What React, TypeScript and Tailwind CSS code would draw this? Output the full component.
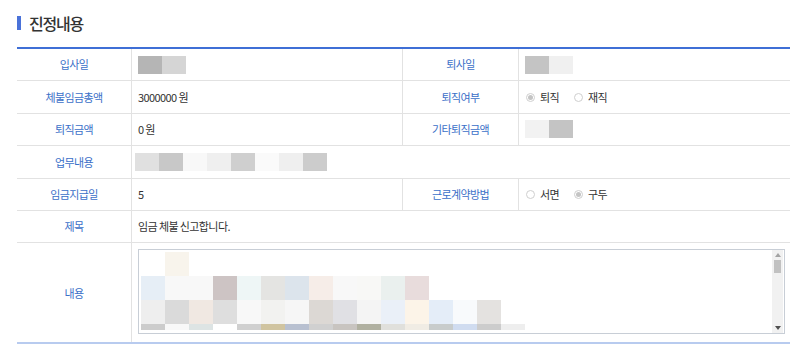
import React from "react";

const mosaic: string[][] = [
  ["#ffffff", "#f8f4ec"],
  ["#e6eef6", "#f8f8f8", "#f8f8f8", "#cdc4c4", "#eef6f6", "#e4e4e2", "#dce4ec", "#f6ede8", "#f8f8f8", "#f8f8f6", "#eaf0ee", "#e8dcdc"],
  ["#eeeeee", "#dadada", "#f0e8e2", "#dedede", "#f8f8f8", "#f2f2f0", "#f6f6f6", "#dcd8d4", "#e0e0e4", "#f4f4f4", "#eaf0f8", "#fcf4e8", "#e4edf8", "#f8fafc", "#e4e2e0"],
  ["#cccccc", "#f8f8f8", "#dde4e4", "#ffffff", "#d0d0d0", "#d0c4a0", "#b8c0d0", "#d0d0d0", "#c8c4c0", "#b0b0a0", "#e0e0dc", "#f0ece4", "#c8cccc", "#d0dcf0", "#cccccc", "#eeeeee"],
];

function Blocks({ colors }: { colors: string[] }) {
  return (
    <div className="flex h-[18px]">
      {colors.map((c, i) => (
        <div key={i} className="w-[24px] h-full" style={{ backgroundColor: c }} />
      ))}
    </div>
  );
}

function Radio({ checked, label }: { checked?: boolean; label: string }) {
  return (
    <label className="flex items-center gap-[5px]">
      <span className="w-[9px] h-[9px] rounded-full border border-[#cfcfcf] bg-white flex items-center justify-center">
        {checked && <span className="w-[5px] h-[5px] rounded-full bg-[#c4c4c4]" />}
      </span>
      <span>{label}</span>
    </label>
  );
}

function Label({ children }: { children: React.ReactNode }) {
  return (
    <div className="flex items-center justify-center h-[32.4px] border-b border-r border-[#e2e2e2] text-[#3b70c8]">
      {children}
    </div>
  );
}

function Value({ children, last, wide }: { children?: React.ReactNode; last?: boolean; wide?: boolean }) {
  return (
    <div
      className={`flex items-center pl-[6px] h-[32.4px] border-b border-[#e2e2e2] text-[#333] ${last ? "" : "border-r"} ${wide ? "col-span-3" : ""}`}
    >
      {children}
    </div>
  );
}

export default function App() {
  return (
    <div
      className="w-[800px] h-[347px] bg-white px-[17px] pt-[15px] overflow-hidden"
      style={{ fontFamily: '"Noto Sans CJK KR", "Noto Sans", sans-serif' }}
    >
      <div className="flex items-center gap-[8px] h-[15px]">
        <span className="w-[4px] h-[14px] bg-[#4a72d9]" />
        <h2 className="text-[16px] font-medium text-[#333] tracking-[-1.2px] leading-none">진정내용</h2>
      </div>

      <div className="mt-[17px] w-[773px] border-t-2 border-[#3f6fd6] border-b-2 border-b-[#b8cbef] text-[11px] tracking-[-0.6px]">
        <div className="grid grid-cols-[115px_271px_116px_1fr]">
          <Label>입사일</Label>
          <Value>
            <Blocks colors={["#b5b5b5", "#d5d5d5"]} />
          </Value>
          <Label>퇴사일</Label>
          <Value last>
            <Blocks colors={["#c4c4c4", "#f0f0f0"]} />
          </Value>

          <Label>체불임금총액</Label>
          <Value>3000000 원</Value>
          <Label>퇴직여부</Label>
          <Value last>
            <div className="flex items-center gap-[15px] pl-[1px]">
              <Radio checked label="퇴직" />
              <Radio label="재직" />
            </div>
          </Value>

          <Label>퇴직금액</Label>
          <Value>0 원</Value>
          <Label>기타퇴직금액</Label>
          <Value last>
            <Blocks colors={["#f2f2f2", "#c4c4c4"]} />
          </Value>

          <Label>업무내용</Label>
          <Value wide last>
            <div className="-ml-[3px]">
              <Blocks colors={["#e0e0e0", "#c8c8c8", "#f8f8f8", "#efefef", "#cfcfcf", "#fafafa", "#efefef", "#cccccc"]} />
            </div>
          </Value>

          <Label>임금지급일</Label>
          <Value>5</Value>
          <Label>근로계약방법</Label>
          <Value last>
            <div className="flex items-center gap-[15px] pl-[1px]">
              <Radio label="서면" />
              <Radio checked label="구두" />
            </div>
          </Value>

          <Label>제목</Label>
          <Value wide last>임금 체불 신고합니다.</Value>

          <div className="flex items-center justify-center h-[99px] border-r border-[#e2e2e2] text-[#3b70c8]">내용</div>
          <div className="col-span-3 h-[99px] pl-[6px] pr-[5px] pt-[6px]">
            <div className="relative h-[85px] border border-[#c8ced6] bg-white overflow-hidden flex">
              <div className="flex-1 pl-[2px] pt-[2px] flex flex-col">
                {mosaic.map((row, r) => (
                  <div key={r} className={`flex ${r === 3 ? "h-[6px]" : "h-[24px]"}`}>
                    {row.map((c, i) => (
                      <div key={i} className="w-[24px] h-full" style={{ backgroundColor: c }} />
                    ))}
                  </div>
                ))}
              </div>
              <div className="w-[11px] mr-[1px] bg-[#f1f1f1] flex flex-col items-center justify-between py-[3px]">
                <div className="flex flex-col items-center gap-[3px]">
                  <span className="w-0 h-0 border-l-[3px] border-r-[3px] border-b-[4px] border-l-transparent border-r-transparent border-b-[#a3a3a3]" />
                  <span className="w-[7px] h-[13px] bg-[#c1c1c1]" />
                </div>
                <span className="w-0 h-0 border-l-[3px] border-r-[3px] border-t-[4px] border-l-transparent border-r-transparent border-t-[#505050]" />
              </div>
            </div>
          </div>
        </div>
      </div>
    </div>
  );
}
